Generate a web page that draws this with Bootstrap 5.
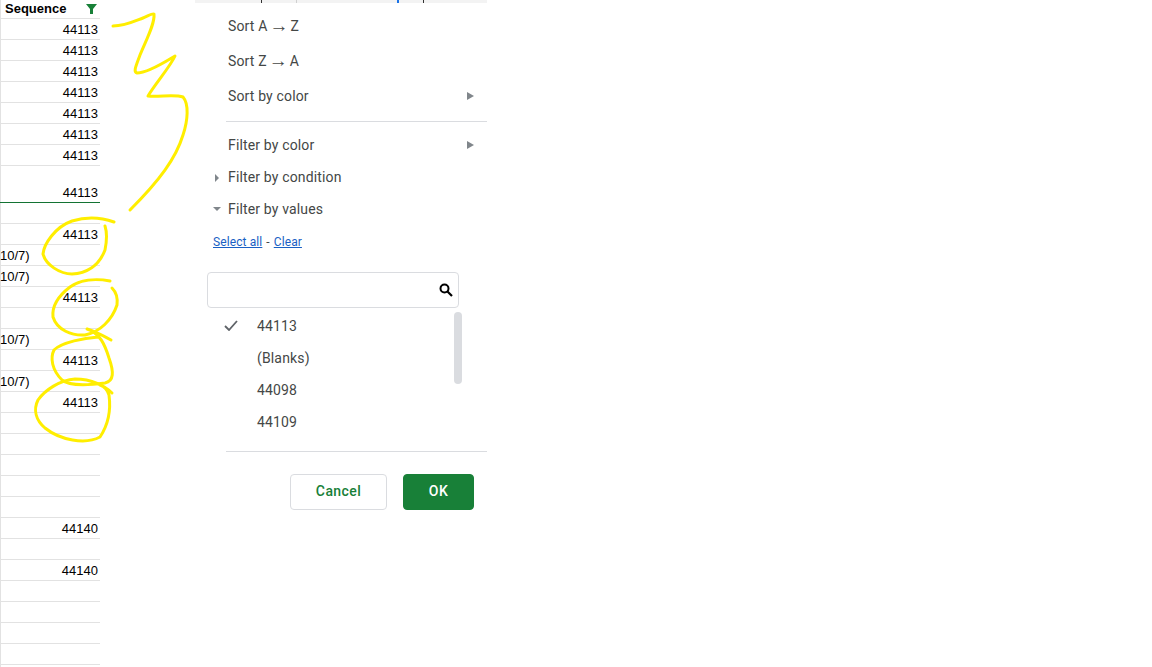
<!DOCTYPE html>
<html lang="en">
<head>
    <meta charset="UTF-8">
    <title>Filter by values</title>
    <link href="https://cdn.jsdelivr.net/npm/bootstrap@5.3.0/dist/css/bootstrap.min.css" rel="stylesheet">
    <style>
        body {
            background: #fff;
            height: 667px;
            overflow: hidden;
            position: relative;
        }
        .sheet-col {
            width: 100px;
            margin-right: 87px;
            border-left: 1px solid #e2e2e2;
            font: 13px/20px "Liberation Sans", Arial, sans-serif;
            color: #000;
        }
        .sheet-head {
            height: 19px;
            line-height: 17px;
            padding-left: 4px;
            padding-right: 3px;
            font-weight: 700;
            border-bottom: 1px solid #e2e2e2;
        }
        .sheet-head span { margin-top: -2px; }
        .sheet-row {
            height: 21px;
            padding-right: 2px;
            padding-top: 1px;
            text-align: right;
            border-bottom: 1px solid #e2e2e2;
            white-space: nowrap;
        }
        .sheet-row.tall { height: 37px; padding-top: 17px; margin-left: -1px; border-bottom-color: #137333; }
        .sheet-row.over { text-align: left; margin-left: -1px; }
        .filter-panel {
            width: 300px;
            font: 14px/20px Roboto, "Liberation Sans", Arial, sans-serif;
            letter-spacing: .15px;
            color: #444746;
        }
        .panel-top {
            height: 3px;
            margin-left: 8px;
            background: #f3f3f3;
            position: relative;
        }
        .top-tick { position: absolute; top: 0; width: 1px; height: 3px; background: #d0d0d0; }
        .top-tick.t1 { left: 66px; background: #333; }
        .top-tick.t2 { left: 101px; }
        .top-tick.t3 { left: 202px; width: 2px; background: #1a73e8; }
        .top-tick.t4 { left: 228px; background: #333; }
        .panel-body { padding-left: 41px; }
        .panel-body.first { padding-top: 5px; }
        .panel-body.second { padding-top: 7px; }
        .menu-line { height: 35px; padding-right: 13px; }
        .menu-line.tight { height: 32px; }
        .arrow-glyph { font: 19px/20px "Liberation Sans", Arial, sans-serif; letter-spacing: 0; margin: 0 -2px; }
        .tri-right { width: 0; height: 0; border-left: 7px solid #80868b; border-top: 4px solid transparent; border-bottom: 4px solid transparent; }
        .tri-small { width: 0; height: 0; border-left: 4px solid #80868b; border-top: 4px solid transparent; border-bottom: 4px solid transparent; position: absolute; left: -13px; top: 13px; }
        .tri-down { width: 0; height: 0; border-top: 4px solid #80868b; border-left: 4px solid transparent; border-right: 4px solid transparent; position: absolute; left: -15px; top: 14px; }
        .panel-rule { border-top: 1px solid #dadce0; margin-left: 39px; }
        .panel-rule.upper { margin-top: 8px; }
        .panel-links { margin-left: 26px; height: 33px; padding-top: 1px; font-size: 12px; line-height: 16px; letter-spacing: .1px; }
        .panel-links a { color: #1a5fc4; }
        .search-box { width: 252px; height: 36px; margin-top: 14px; margin-left: 20px; border: 1px solid #dadce0; border-radius: 4px; padding-right: 5px; }
        .value-wrap { margin-left: 20px; width: 256px; height: 143px; padding-top: 2px; position: relative; }
        .value-line { height: 32px; padding-left: 50px; position: relative; }
        .value-check { position: absolute; left: 17px; top: 10px; }
        .value-scroll { position: absolute; left: 247px; top: 4px; width: 8px; height: 72px; border-radius: 4px; background: #dadce0; }
        .btn-row { padding-top: 22px; padding-left: 103px; gap: 16px; }
        .btn-cancel, .btn-ok { height: 36px; font: 500 14px/20px Roboto, Arial, sans-serif; letter-spacing: .4px; border-radius: 4px; padding: 0 0 2px; }
        .btn-cancel { width: 97px; background: #fff; color: #188038; border: 1px solid #dadce0; }
        .btn-ok { width: 71px; background: #188038; color: #fff; border: 1px solid #188038; }
        .ink-layer { position: absolute; left: 0; top: 0; pointer-events: none; }
    </style>
</head>
<body>
    <div class="d-flex">
        <div class="sheet-col" id="sheet">
            <div class="sheet-head d-flex justify-content-between align-items-center">
                <span>Sequence</span>
                <svg width="11" height="10" viewBox="0 0 11 10"><path d="M0 0h11L7 5v5H4V5z" fill="#188038"/></svg>
            </div>
        </div>
        <div class="filter-panel">
            <div class="panel-top">
                <span class="top-tick t1"></span><span class="top-tick t2"></span><span class="top-tick t3"></span><span class="top-tick t4"></span>
            </div>
            <div class="panel-body first">
                <div class="menu-line"><div class="d-flex align-items-center h-100 gap-1">Sort A <span class="arrow-glyph">→</span> Z</div></div>
                <div class="menu-line"><div class="d-flex align-items-center h-100 gap-1">Sort Z <span class="arrow-glyph">→</span> A</div></div>
                <div class="menu-line d-flex justify-content-between align-items-center">Sort by color <span class="tri-right"></span></div>
            </div>
            <div class="panel-rule upper"></div>
            <div class="panel-body second">
                <div class="menu-line tight d-flex justify-content-between align-items-center">Filter by color <span class="tri-right"></span></div>
                <div class="menu-line tight d-flex align-items-center position-relative"><span class="tri-small"></span>Filter by condition</div>
                <div class="menu-line tight d-flex align-items-center position-relative"><span class="tri-down"></span>Filter by values</div>
            </div>
            <div class="panel-links d-flex align-items-center gap-1"><a href="#">Select all</a> - <a href="#">Clear</a></div>
            <div class="search-box d-flex justify-content-end align-items-center">
                <svg width="14" height="14" viewBox="0 0 14 14"><circle cx="5.500" cy="5.500" r="4" fill="none" stroke="#000" stroke-width="2"/><path d="M8.500 8.500L13 13" stroke="#000" stroke-width="2.200"/></svg>
            </div>
            <div class="value-wrap">
                <div class="value-line d-flex align-items-center"><svg class="value-check" width="14" height="11" viewBox="0 0 14 11"><path d="M1 6l4 4 8-9" fill="none" stroke="#5f6368" stroke-width="1.800"/></svg>44113</div>
                <div class="value-line d-flex align-items-center">(Blanks)</div>
                <div class="value-line d-flex align-items-center">44098</div>
                <div class="value-line d-flex align-items-center">44109</div>
                <div class="value-scroll"></div>
            </div>
            <div class="panel-rule"></div>
            <div class="btn-row d-flex">
                <button class="btn-cancel">Cancel</button>
                <button class="btn-ok">OK</button>
            </div>
        </div>
    </div>

    <svg class="ink-layer" width="1152" height="667" fill="none" stroke="#ffee00" stroke-width="3" stroke-linecap="round" stroke-linejoin="round">
        <path d="M113 26C125 26 135 21 143 18C148 16 153 13 154 14C155 24 146 40 140 55C136 66 133 72 137 73C148 73 165 62 175 56C170 67 155 84 148 96C160 97 175 94 183 97C189 104 188 120 183 135C176 158 160 180 130 210"/>
        <path d="M114 222C100 217 85 217 72 221C55 227 44 244 43 254C46 265 60 274 72 274C90 273 100 263 105 250C107 240 107 232 105 226"/>
        <path d="M110 281C95 278 80 280 70 287C57 297 52 308 53 317C57 330 72 336 85 335C100 332 112 320 117 305C118 297 115 291 112 288"/>
        <path d="M111 340C100 334 92 330 87 329C100 333 105 345 109 358C114 372 114 381 105 383C90 385 70 387 62 380C52 370 50 358 54 350C62 342 85 338 98 337"/>
        <path d="M112 393C105 386 92 379 75 379C60 380 45 390 38 400C33 410 36 420 45 428C60 440 85 445 100 437C108 425 111 410 109 395C107 388 103 386 100 385"/>
    </svg>

    <script>
        // rows of the sheet column, top to bottom
        const rows = ["44113","44113","44113","44113","44113","44113","44113",
            {t:"44113",c:"tall"},"","44113",{t:"10/7)",c:"over"},{t:"10/7)",c:"over"},"44113","",
            {t:"10/7)",c:"over"},"44113",{t:"10/7)",c:"over"},"44113","","","","","","44140","","44140","","","","",""];
        const sheet = document.getElementById("sheet");
        rows.forEach(r => {
            let el = document.createElement("div");
            el.className = "sheet-row" + (r.c ? " " + r.c : "");
            el.textContent = r.t !== undefined ? r.t : r;
            sheet.appendChild(el);
        });
    </script>
    <script src="https://cdn.jsdelivr.net/npm/bootstrap@5.3.0/dist/js/bootstrap.bundle.min.js"></script>
</body>
</html>
